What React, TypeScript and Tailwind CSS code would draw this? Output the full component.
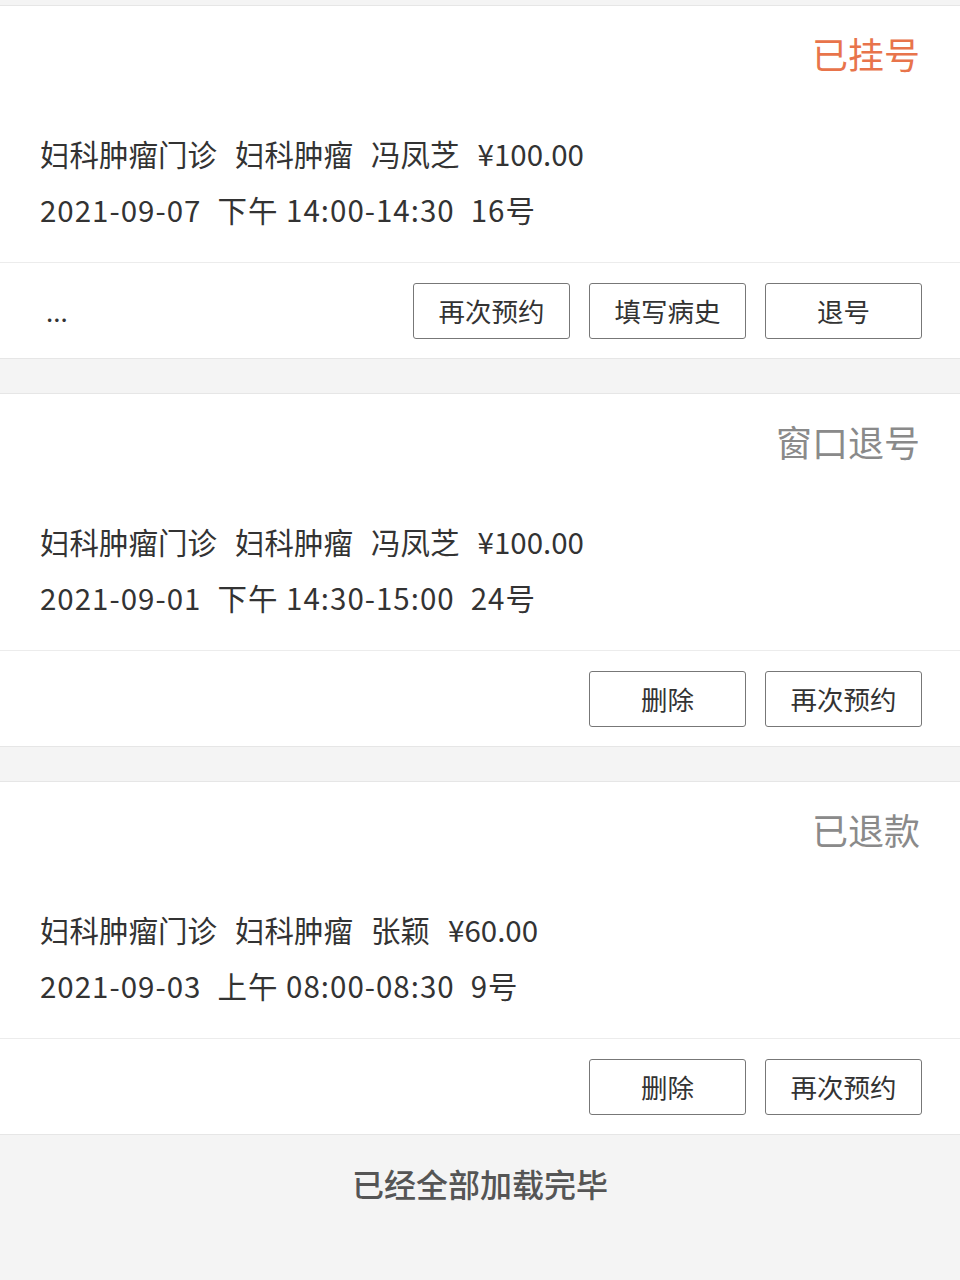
import React from "react";

type Order = {
  status: string;
  tone: "active" | "muted";
  dept: string;
  clinic: string;
  doctor: string;
  fee: string;
  date: string;
  slot: string;
  num: string;
  actions: string[];
  more?: boolean;
};

const orders: Order[] = [
  {
    status: "已挂号", tone: "active", dept: "妇科肿瘤门诊", clinic: "妇科肿瘤", doctor: "冯凤芝", fee: "¥100.00",
    date: "2021-09-07", slot: "下午 14:00-14:30", num: "16号", actions: ["再次预约", "填写病史", "退号"], more: true,
  },
  {
    status: "窗口退号", tone: "muted", dept: "妇科肿瘤门诊", clinic: "妇科肿瘤", doctor: "冯凤芝", fee: "¥100.00",
    date: "2021-09-01", slot: "下午 14:30-15:00", num: "24号", actions: ["删除", "再次预约"],
  },
  {
    status: "已退款", tone: "muted", dept: "妇科肿瘤门诊", clinic: "妇科肿瘤", doctor: "张颖", fee: "¥60.00",
    date: "2021-09-03", slot: "上午 08:00-08:30", num: "9号", actions: ["删除", "再次预约"],
  },
];

function OrderCard({ o }: { o: Order }) {
  return (
    <div className="bg-white border-y border-[#e6e6e6]">
      <div className="px-10 pt-[29px] pb-[25px] border-b border-[#ececec]">
        <div className={`text-right text-[36px] leading-[36px] ${o.tone === "active" ? "text-[#e8744b]" : "text-[#8a8a8a]"}`}>
          {o.status}
        </div>
        <div className="mt-[54px] text-[29.5px] leading-[56px] text-[#333]">
          <div className="flex gap-[18px]">
            <span>{o.dept}</span><span>{o.clinic}</span><span>{o.doctor}</span><span>{o.fee}</span>
          </div>
          <div className="flex gap-[16px] tracking-[1px]">
            <span>{o.date}</span><span>{o.slot}</span><span>{o.num}</span>
          </div>
        </div>
      </div>
      <div className="h-[95px] pl-[46px] pr-[38px] flex items-center">
        <div className="flex-1 text-[26px] leading-none text-[#333]">{o.more ? "..." : ""}</div>
        <div className="flex gap-[19px]">
          {o.actions.map((a) => (
            <button key={a}
              className="w-[157px] h-[56px] border border-[#777] rounded-[3px] bg-white text-[26.5px] text-[#333] flex items-center justify-center">
              {a}
            </button>
          ))}
        </div>
      </div>
    </div>
  );
}

export default function App() {
  return (
    <div className="min-h-[1280px] bg-[#f4f4f4] pt-[5px]" style={{ fontFamily: '"Noto Sans CJK SC", "Noto Sans", sans-serif' }}>
      <div className="flex flex-col gap-[34px]">
        {orders.map((o, i) => <OrderCard key={i} o={o} />)}
      </div>
      <div className="pt-[29px] text-center text-[32px] leading-[38px] font-medium text-[#555]">已经全部加载完毕</div>
    </div>
  );
}
